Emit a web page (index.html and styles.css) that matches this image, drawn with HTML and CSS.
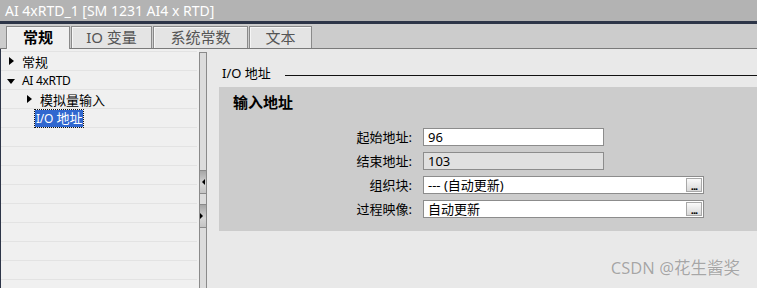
FILE: index.html
```html
<!DOCTYPE html>
<html lang="zh">
<head>
    <meta charset="UTF-8">
    <title>AI 4xRTD_1</title>
    <link rel="stylesheet" href="styles.css">
</head>
<body>
    <div id="title-bar">AI 4xRTD_1 [SM 1231 AI4 x RTD]</div>

    <div id="tab-bar">
        <div class="tab active">常规</div>
        <div class="tab">IO 变量</div>
        <div class="tab">系统常数</div>
        <div class="tab">文本</div>
    </div>

    <div id="main">
        <div id="tree">
            <div class="row"><span class="arrow right"></span>常规</div>
            <div class="row"><span class="arrow down"></span><span class="latin">AI 4xRTD</span></div>
            <div class="row level-2"><span class="arrow right"></span>模拟量输入</div>
            <div class="row level-2"><span class="selected"><span class="latin">I/O</span> 地址</span></div>
            <div class="row"></div>
            <div class="row"></div>
            <div class="row"></div>
            <div class="row"></div>
            <div class="row"></div>
            <div class="row"></div>
            <div class="row"></div>
            <div class="row"></div>
            <div class="row"></div>
        </div>

        <div id="splitter">
            <div class="split-btn"><span class="tri left"></span></div>
            <div class="split-btn"><span class="tri right"></span></div>
        </div>

        <div id="content">
            <div class="section-head">
                <span>I/O 地址</span>
                <div class="rule"></div>
            </div>

            <div class="group">
                <div class="group-title">输入地址</div>
                <div class="form">
                    <label>起始地址:</label>
                    <div class="field short">96</div>
                    <label>结束地址:</label>
                    <div class="field short readonly">103</div>
                    <label>组织块:</label>
                    <div class="field long">--- (自动更新)<span class="dots">...</span></div>
                    <label>过程映像:</label>
                    <div class="field long">自动更新<span class="dots">...</span></div>
                </div>
            </div>

            <div class="watermark">CSDN @花生酱奖</div>
        </div>
    </div>
</body>
</html>
```

FILE: styles.css
```css
/* Basic Reset */
* { margin: 0; padding: 0; box-sizing: border-box; }
body { width: 757px; height: 288px; overflow: hidden; background-color: #e9e9e9; color: #000; font-family: "Noto Sans", "Noto Sans CJK SC", sans-serif; font-size: 13px; }

/* Title */
#title-bar { height: 24px; padding-left: 5px; line-height: 21px; color: #fff; background-color: #b3b3b3; border-bottom: 3px solid #2d3548; font-size: 14px; }

/* Tabs */
#tab-bar { display: flex; align-items: flex-end; height: 25px; padding-left: 6px; background-color: #cccccc; border-bottom: 1px solid #7a7a7a; }
.tab { height: 22px; padding: 0 4px; margin-right: 1px; line-height: 20px; font-size: 15px; color: #555; background-color: #e4e4e4; border: 1px solid #8a8a8a; border-bottom: none; box-shadow: inset 1px 1px 0 #f6f6f6; text-align: center; }
.tab:nth-child(1) { width: 64px; }
.tab:nth-child(2) { width: 81px; }
.tab:nth-child(3) { width: 95px; }
.tab:nth-child(4) { width: 63px; }
.tab.active { height: 23px; margin-bottom: -1px; font-weight: bold; color: #000; background-color: #f0f0f0; }

/* Layout */
#main { display: flex; height: 239px; }

/* Tree */
#tree { width: 199px; padding: 2px 2px 0 0; background-color: #f0f0f0; border-left: 1px solid #2d3548; overflow: hidden; }
.row { display: flex; align-items: center; height: 19px; padding-left: 6px; border-top: 1px solid #e3e3e3; font-size: 13px; white-space: nowrap; }
.row.level-2 { padding-left: 24px; }
.row .latin { font-size: 12px; letter-spacing: -0.3px; }
.arrow { display: inline-block; width: 0; height: 0; margin-right: 7px; border-style: solid; border-color: transparent; }
.arrow.right { margin-left: 2px; margin-right: 8px; border-width: 4px 0 4px 5px; border-left-color: #000; }
.arrow.down { margin-top: 2px; border-width: 5px 4px 0 4px; border-top-color: #000; }
.row .selected { margin-left: 10px; padding: 0 1px; line-height: 16px; font-size: 13px; color: #fff; background-color: #3067cf; outline: 1px dotted #111; }

/* Splitter */
#splitter { display: flex; flex-direction: column; width: 8px; margin-top: 3px; padding-top: 117px; background-color: #dcdcdc; border: 1px solid #8a8a8a; border-bottom: none; gap: 10px; }
.split-btn { display: flex; align-items: center; height: 24px; background: linear-gradient(to bottom, #a6a6a6, #d6d6d6 60%, #c4c4c4); border-top: 1px solid #8a8a8a; border-bottom: 1px solid #8a8a8a; }
.tri { width: 0; height: 0; border-style: solid; border-color: transparent; }
.tri.left { margin-left: 2px; border-width: 3px 3px 3px 0; border-right-color: #000; }
.tri.right { border-width: 3px 0 3px 3px; border-left-color: #000; }

/* Content */
#content { position: relative; flex: 1; padding: 15px 0 0 12px; }
.section-head { display: flex; align-items: center; height: 17px; padding-left: 3px; font-size: 13px; }
.section-head .rule { flex: 1; height: 1px; margin: 5px 0 0 14px; background-color: #111; }

.group { height: 144px; margin-top: 6px; padding: 6px 0 0 14px; background-color: #cccccc; }
.group-title { font-size: 15px; font-weight: bold; line-height: 18px; }

.form { display: grid; grid-template-columns: 179px auto; column-gap: 11px; row-gap: 6px; margin-top: 17px; align-items: center; }
.form label { height: 18px; line-height: 18px; text-align: right; font-size: 13px; }
.field { position: relative; height: 18px; padding-left: 4px; line-height: 16px; font-size: 13px; background-color: #fff; border: 1px solid #8c8c8c; }
.field.short { width: 181px; }
.field.long { width: 281px; }
.field.readonly { background-color: #e0e0e0; }
.dots { position: absolute; top: 1px; right: 1px; width: 16px; height: 14px; font-size: 11px; font-weight: bold; line-height: 14px; text-align: center; letter-spacing: -1px; background: linear-gradient(to bottom, #fafafa, #d8d8d8); border: 1px solid #a8a8a8; }

.watermark { position: absolute; right: 17px; bottom: 9px; font-size: 16.5px; color: #a6a6a6; text-shadow: 0 0 1px #fff; }
```
